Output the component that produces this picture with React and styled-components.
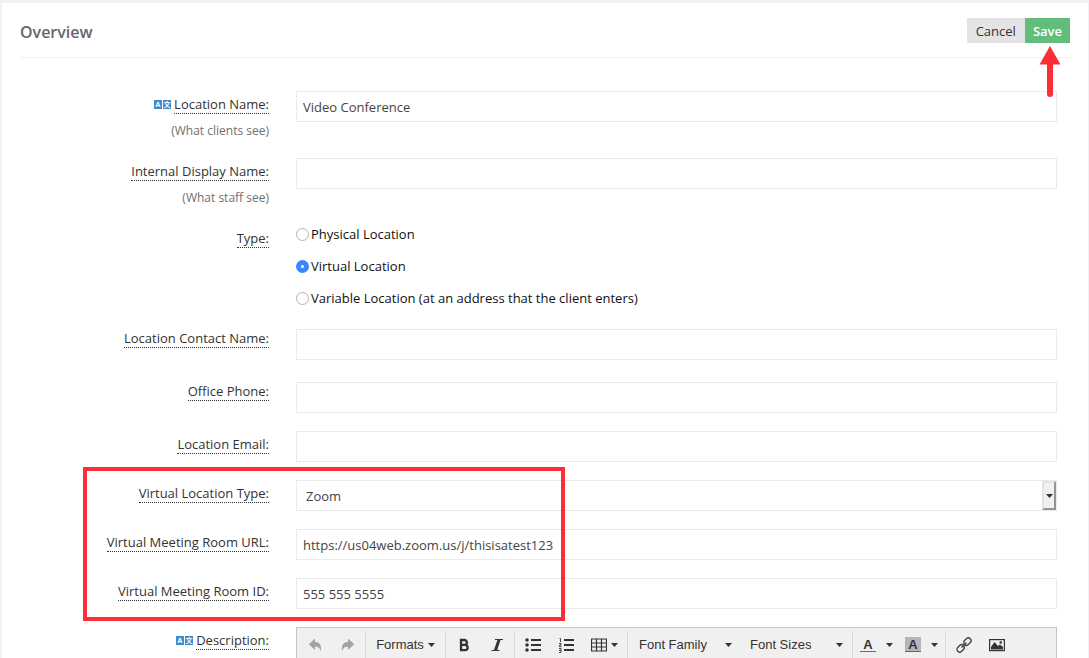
import React, { useState } from 'react';
import styled, { createGlobalStyle } from 'styled-components';

const colors = {
  page: '#eff3f8',
  text: '#333333',
  muted: '#707070',
  border: '#ebebeb',
  green: '#62bd7c',
  blue: '#3d8bd0',
  red: '#fb2d36',
  toolbar: '#f0f0f0',
};

const sans = "'Open Sans', 'Noto Sans', sans-serif";
const ui = "'Liberation Sans', Arial, sans-serif";

const GlobalStyle = createGlobalStyle`
  *, *::before, *::after {
    box-sizing: border-box;
  }
  html {
    scrollbar-width: none;
  }
  body {
    margin: 0;
    background: ${colors.page};
    color: ${colors.text};
    font-family: ${sans};
    font-size: 13px;
    line-height: 18px;
  }
`;

const Page = styled.div`
  padding: 3px 1px 0 2px;
`;

const Card = styled.main`
  min-height: calc(100vh - 3px);
  padding: 15px 18px 0;
  background: #ffffff;
`;

const Header = styled.header`
  position: relative;
  z-index: 1;
  display: flex;
  justify-content: space-between;
  align-items: flex-start;
  padding-bottom: 11px;
  border-bottom: 1px solid #f0f0f0;
`;

const Title = styled.h1`
  margin: 0;
  color: #666666;
  font-size: 16px;
  font-weight: 600;
  line-height: 28px;
`;

const Actions = styled.div`
  display: flex;
`;

const ActionButton = styled.button`
  height: 25px;
  padding: 0 ${(props) => (props.$primary ? 8 : 9)}px;
  border: 0;
  background: ${(props) => (props.$primary ? colors.green : '#e4e4e4')};
  color: ${(props) => (props.$primary ? '#ffffff' : colors.text)};
  font-family: ${sans};
  font-size: 13px;
  font-weight: ${(props) => (props.$primary ? 600 : 400)};
  cursor: pointer;
`;

const Arrow = styled.svg`
  position: absolute;
  top: 28px;
  right: 9px;
`;

const Form = styled.form`
  padding: 33px 13px 0 0;
`;

const Row = styled.div`
  display: grid;
  grid-template-columns: 249px minmax(0, 1fr);
  column-gap: 27px;
  align-items: start;
  padding-bottom: ${(props) => (props.$last ? 0 : 18)}px;
`;

const LabelCell = styled.div`
  padding-top: 4px;
  text-align: right;
`;

const Label = styled.label`
  display: inline-block;
  border-bottom: 1px dotted ${colors.text};
`;

const Hint = styled.div`
  margin-top: 8px;
  color: ${colors.muted};
  font-size: 12px;
`;

const Control = styled.div`
  position: relative;
  padding-top: ${(props) => (props.$low ? 4 : 0)}px;
`;

const TextInput = styled.input`
  display: block;
  width: 100%;
  height: 31px;
  padding: 0 6px;
  border: 1px solid ${colors.border};
  background: #ffffff;
  color: #444444;
  font-family: ${sans};
  font-size: 13px;
`;

const Select = styled.select`
  display: block;
  width: 100%;
  height: 31px;
  padding: 0 9px;
  border: 1px solid ${colors.border};
  border-radius: 0;
  appearance: none;
  background: #ffffff;
  color: #444444;
  font-family: ${sans};
  font-size: 13px;
`;

const SelectArrow = styled.span`
  position: absolute;
  top: 1px;
  right: 1px;
  display: flex;
  align-items: center;
  justify-content: center;
  width: 14px;
  height: 29px;
  border: 2px solid;
  border-color: #e3e3e3 #949494 #949494 #e3e3e3;
  background: ${colors.toolbar};
  pointer-events: none;
`;

const RadioGroup = styled.div`
  display: flex;
  flex-direction: column;
  gap: 14px;
  color: #111111;
`;

const RadioLabel = styled.label`
  display: flex;
  align-items: center;
  gap: 2px;
`;

const Radio = styled.input`
  appearance: none;
  width: 13px;
  height: 13px;
  margin: 0;
  border: 1px solid #b5b5b5;
  border-radius: 50%;
  background: #ffffff;
  &:checked {
    border: 5px solid #3b86fb;
  }
`;

const Highlighted = styled.div`
  position: relative;
`;

const HighlightBox = styled.div`
  position: absolute;
  top: -13px;
  bottom: 6px;
  left: 63px;
  width: 482px;
  border: 4px solid ${colors.red};
  pointer-events: none;
`;

const TranslateSvg = styled.svg`
  margin-right: 3px;
`;

const Editor = styled.div`
  border: 1px solid #c5c5c5;
  border-bottom: 0;
  background: ${colors.toolbar};
`;

const Toolbar = styled.div`
  display: flex;
  padding-top: 3px;
`;

const ToolGroup = styled.div`
  display: flex;
  padding: 0 1px;
  & + & {
    border-left: 1px solid #dadada;
  }
`;

const ToolButton = styled.button`
  display: flex;
  align-items: center;
  justify-content: ${(props) => (props.$spread ? 'space-between' : 'center')};
  gap: ${(props) => props.$gap || 4}px;
  width: ${(props) => props.$width || 33}px;
  height: 27px;
  padding: ${(props) => (props.$spread ? '0 8px 0 10px' : '0')};
  border: 0;
  background: transparent;
  color: #333333;
  font-family: ${ui};
  font-size: 13px;
  white-space: nowrap;
  opacity: ${(props) => (props.disabled ? 0.4 : 1)};
`;

const TranslateIcon = () => (
  <TranslateSvg width='17' height='9' viewBox='0 0 17 9' aria-hidden='true'>
    <rect width='8' height='9' fill={colors.blue} />
    <rect x='9' width='8' height='9' fill={colors.blue} />
    <text x='4' y='7' fontFamily='Open Sans' fontSize='7' fontWeight='700' fill='#fff' textAnchor='middle'>A</text>
    <text x='13' y='7' fontFamily='Noto Sans CJK SC' fontSize='7' fontWeight='700' fill='#fff' textAnchor='middle'>文</text>
  </TranslateSvg>
);

const Caret = () => (
  <svg width='7' height='4' viewBox='0 0 7 4' aria-hidden='true'>
    <path d='M0 0h7L3.500 4z' fill='#333' />
  </svg>
);

// 16px toolbar glyphs
const Glyph = ({ children }) => (
  <svg width='16' height='16' viewBox='0 0 16 16' fill='#333' aria-hidden='true'>
    {children}
  </svg>
);

const UndoPath = 'M8 1.500v3.500c4.500 0 6.700 2.500 6 9.500-1-3.700-2.500-4.800-6-4.800V13L1.800 7.200z';

const Undo = () => (
  <Glyph>
    <path d={UndoPath} />
  </Glyph>
);

const Redo = () => (
  <Glyph>
    <path d={UndoPath} transform='translate(16 0) scale(-1 1)' />
  </Glyph>
);

const Bold = () => (
  <Glyph>
    <path d='M5 3h3.500a2.300 2.300 0 0 1 0 4.800H5zM5 7.800h4a2.600 2.600 0 0 1 0 5.300H5z' fill='none' stroke='#333' strokeWidth='2.300' />
  </Glyph>
);

const Italic = () => (
  <Glyph>
    <path d='M6 2h8v1h-2.500L8.200 13h2.300v1h-8v-1h2.500L8.400 3H6z' />
  </Glyph>
);

const BulletList = () => (
  <Glyph>
    <path d='M6 2h10v2H6zM6 7h10v2H6zM6 12h10v2H6z' />
    <circle cx='2' cy='3' r='1.800' />
    <circle cx='2' cy='8' r='1.800' />
    <circle cx='2' cy='13' r='1.800' />
  </Glyph>
);

const NumberList = () => (
  <Glyph>
    <path d='M6 2h10v2H6zM6 7h10v2H6zM6 12h10v2H6z' />
    <path d='M1.500 1.500h1V5M1 6.500h2v1.700H1.500v1.500H3.500M1 11.500h2v4H1M1 13.500h2' fill='none' stroke='#333' strokeWidth='.9' />
  </Glyph>
);

const Table = () => (
  <Glyph>
    <path d='M.5 2h15v12H.5zM.5 6h15M.5 10h15M5.500 2v12M10.500 2v12' fill='none' stroke='#333' strokeWidth='1.200' />
  </Glyph>
);

const ColorA = ({ filled }) => (
  <Glyph>
    {filled && <rect x='0' y='0' width='16' height='14' fill='#b5b5b5' />}
    <text x='8' y='12' fontFamily='Liberation Sans' fontSize='13' fontWeight='700' textAnchor='middle'>A</text>
    <rect x='0' y='14' width='16' height='1' fill='#666' />
  </Glyph>
);

const Link = () => (
  <Glyph>
    <g fill='none' stroke='#444' strokeWidth='1.400' transform='rotate(-45 8 8)'>
      <rect x='-.8' y='5.300' width='8' height='5.400' rx='2.700' />
      <rect x='8.800' y='5.300' width='8' height='5.400' rx='2.700' />
      <path d='M4.500 8h7' />
    </g>
  </Glyph>
);

const Picture = () => (
  <Glyph>
    <rect x='.6' y='2.600' width='14.800' height='11' fill='none' stroke='#333' strokeWidth='1.200' />
    <path d='M2 12.500V10l3.500-5L9 9l2-1.500L14 10v2.500z' />
    <circle cx='11.700' cy='5.500' r='1.300' />
  </Glyph>
);

const Field = ({ id, label, hint, translate, low, last, children }) => (
  <Row $last={last}>
    <LabelCell>
      {translate && <TranslateIcon />}
      <Label id={`${id}-label`} htmlFor={id}>{label}</Label>
      {hint && <Hint>{hint}</Hint>}
    </LabelCell>
    <Control $low={low}>
      {children || <TextInput id={id} type='text' />}
    </Control>
  </Row>
);

const locationTypes = [
  { value: 'physical', label: 'Physical Location' },
  { value: 'virtual', label: 'Virtual Location' },
  { value: 'variable', label: 'Variable Location (at an address that the client enters)' },
];

export default function App() {
  const [type, setType] = useState('virtual');

  return (
    <Page>
      <GlobalStyle />
      <Card>
        <Header>
          <Title>Overview</Title>
          <Actions>
            <ActionButton type='button'>Cancel</ActionButton>
            <ActionButton type='submit' form='location' $primary>Save</ActionButton>
          </Actions>
          <Arrow width='22' height='52' viewBox='0 0 22 52' aria-hidden='true'>
            <path d='M11 0L21.500 18.500H.5z' fill={colors.red} />
            <path d='M11 16v32' stroke={colors.red} strokeWidth='6' strokeLinecap='round' />
          </Arrow>
        </Header>

        <Form id='location' onSubmit={(e) => e.preventDefault()}>
          <Field id='name' label='Location Name:' hint='(What clients see)' translate>
            <TextInput id='name' type='text' defaultValue='Video Conference' />
          </Field>
          <Field id='display' label='Internal Display Name:' hint='(What staff see)' />
          <Field id='type' label='Type:'>
            <RadioGroup role='radiogroup' aria-labelledby='type-label'>
              {locationTypes.map(({ value, label }, i) => (
                <RadioLabel key={value}>
                  <Radio
                    id={i === 0 ? 'type' : undefined}
                    type='radio'
                    name='type'
                    value={value}
                    checked={type === value}
                    onChange={() => setType(value)}
                  />
                  {label}
                </RadioLabel>
              ))}
            </RadioGroup>
          </Field>
          <Field id='contact' label='Location Contact Name:' low />
          <Field id='phone' label='Office Phone:' low />
          <Field id='email' label='Location Email:' />

          <Highlighted>
            <Field id='virtual-type' label='Virtual Location Type:'>
              <Select id='virtual-type' defaultValue='Zoom'>
                <option>Zoom</option>
              </Select>
              <SelectArrow><Caret /></SelectArrow>
            </Field>
            <Field id='url' label='Virtual Meeting Room URL:'>
              <TextInput id='url' type='text' defaultValue='https://us04web.zoom.us/j/thisisatest123' />
            </Field>
            <Field id='room' label='Virtual Meeting Room ID:'>
              <TextInput id='room' type='text' defaultValue='555 555 5555' />
            </Field>
            <HighlightBox />
          </Highlighted>

          <Field id='description' label='Description:' translate last>
            <Editor id='description'>
              <Toolbar role='toolbar'>
                <ToolGroup>
                  <ToolButton type='button' aria-label='Undo' disabled><Undo /></ToolButton>
                  <ToolButton type='button' aria-label='Redo' disabled><Redo /></ToolButton>
                </ToolGroup>
                <ToolGroup>
                  <ToolButton type='button' $width={77}>Formats <Caret /></ToolButton>
                </ToolGroup>
                <ToolGroup>
                  <ToolButton type='button' aria-label='Bold'><Bold /></ToolButton>
                  <ToolButton type='button' aria-label='Italic'><Italic /></ToolButton>
                </ToolGroup>
                <ToolGroup>
                  <ToolButton type='button' aria-label='Bullet list'><BulletList /></ToolButton>
                  <ToolButton type='button' aria-label='Numbered list'><NumberList /></ToolButton>
                  <ToolButton type='button' aria-label='Table' $width={44}><Table /><Caret /></ToolButton>
                </ToolGroup>
                <ToolGroup>
                  <ToolButton type='button' $width={111} $spread>Font Family <Caret /></ToolButton>
                  <ToolButton type='button' $width={111} $spread>Font Sizes <Caret /></ToolButton>
                </ToolGroup>
                <ToolGroup>
                  <ToolButton type='button' aria-label='Text color' $width={45} $gap={10}><ColorA /><Caret /></ToolButton>
                  <ToolButton type='button' aria-label='Background color' $width={45} $gap={10}><ColorA filled /><Caret /></ToolButton>
                </ToolGroup>
                <ToolGroup>
                  <ToolButton type='button' aria-label='Insert link'><Link /></ToolButton>
                  <ToolButton type='button' aria-label='Insert image'><Picture /></ToolButton>
                </ToolGroup>
              </Toolbar>
            </Editor>
          </Field>
        </Form>
      </Card>
    </Page>
  );
}
